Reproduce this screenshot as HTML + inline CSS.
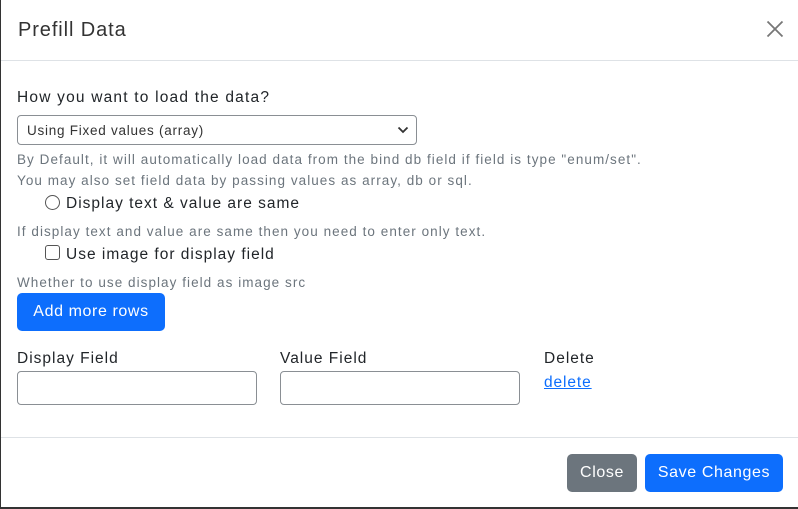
<!DOCTYPE html>
<html><head><meta charset="utf-8"><style>
*{margin:0;padding:0;box-sizing:border-box}
body{width:798px;height:509px;background:#fff;font-family:"Liberation Sans",sans-serif;color:#212529;position:relative;overflow:hidden}
.a{position:absolute;white-space:nowrap;line-height:1}
.muted{color:#6c757d;font-size:13.5px;letter-spacing:1.05px}
.lbl{font-size:15.5px;letter-spacing:1px;color:#212529}
.inp{position:absolute;border:1px solid #8a8f94;border-radius:4px;background:#fff}
.btn{position:absolute;border-radius:5px;color:#fff;font-size:16px;letter-spacing:0.6px;display:flex;align-items:center;justify-content:center}
</style></head><body>
<div style="position:absolute;left:0;top:0;width:1px;height:509px;background:#333"></div>
<div style="position:absolute;left:0;top:507px;width:798px;height:2px;background:#333"></div>
<div class="a" style="left:18px;top:20px;font-size:20px;letter-spacing:0.9px;color:#333">Prefill Data</div>
<svg style="position:absolute;left:766px;top:20px" width="18" height="18" viewBox="0 0 18 18"><path d="M1.5 1.5L16.5 16.5M16.5 1.5L1.5 16.5" stroke="#777" stroke-width="1.8"/></svg>
<div style="position:absolute;left:1px;top:60px;width:797px;height:1px;background:#dee2e6"></div>
<div class="a lbl" style="left:17px;top:90px;letter-spacing:1.2px">How you want to load the data?</div>
<div class="inp" style="left:17px;top:115px;width:400px;height:30px;border-radius:4px"></div>
<div class="a" style="left:27px;top:124px;font-size:13.5px;letter-spacing:0.75px;color:#333">Using Fixed values (array)</div>
<svg style="position:absolute;left:397px;top:125px" width="12" height="10" viewBox="0 0 12 10"><path d="M1.5 2.5L6 7L10.5 2.5" stroke="#333" stroke-width="1.8" fill="none"/></svg>
<div class="a muted" style="left:17px;top:153px">By Default, it will automatically load data from the bind db field if field is type "enum/set".</div>
<div class="a muted" style="left:17px;top:174px">You may also set field data by passing values as array, db or sql.</div>
<div style="position:absolute;left:45px;top:195px;width:15px;height:15px;border:1px solid #555;border-radius:50%"></div>
<div class="a lbl" style="left:66px;top:196px">Display text &amp; value are same</div>
<div class="a muted" style="left:17px;top:225px">If display text and value are same then you need to enter only text.</div>
<div style="position:absolute;left:45px;top:245px;width:15px;height:15px;border:1px solid #555;border-radius:3px"></div>
<div class="a lbl" style="left:66px;top:247px">Use image for display field</div>
<div class="a muted" style="left:17px;top:276px">Whether to use display field as image src</div>
<div class="btn" style="left:17px;top:293px;width:148px;height:38px;background:#0d6efd">Add more rows</div>
<div class="a lbl" style="left:17px;top:351px">Display Field</div>
<div class="a lbl" style="left:280px;top:351px">Value Field</div>
<div class="a lbl" style="left:544px;top:351px">Delete</div>
<div class="inp" style="left:17px;top:371px;width:240px;height:34px"></div>
<div class="inp" style="left:280px;top:371px;width:240px;height:34px"></div>
<div class="a" style="left:544px;top:375px;font-size:15.5px;letter-spacing:0.9px;color:#0d6efd;text-decoration:underline">delete</div>
<div style="position:absolute;left:1px;top:437px;width:797px;height:1px;background:#dee2e6"></div>
<div class="btn" style="left:567px;top:454px;width:70px;height:38px;background:#6c757d">Close</div>
<div class="btn" style="left:645px;top:454px;width:138px;height:38px;background:#0d6efd">Save Changes</div>
</body></html>
